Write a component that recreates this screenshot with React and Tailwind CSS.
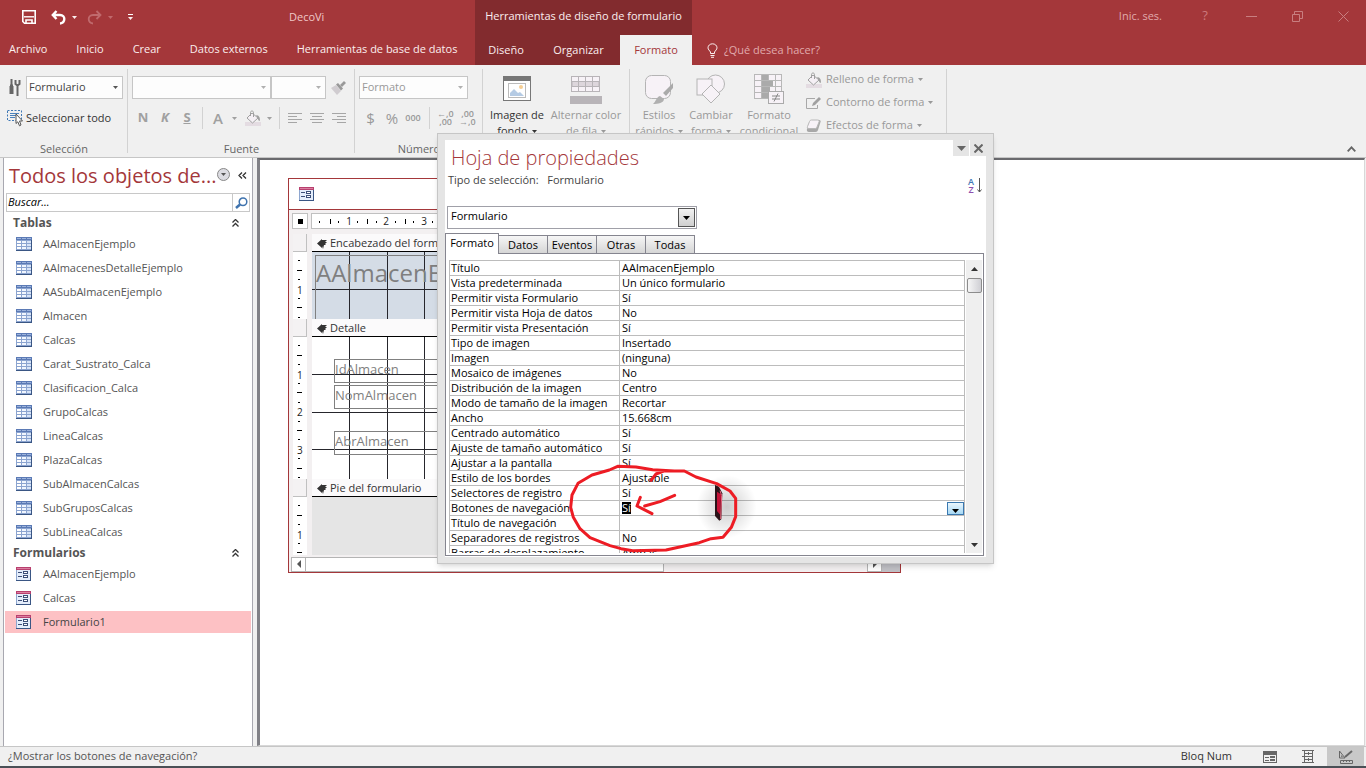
import { useState } from "react";

const tablas = [
  "AAlmacenEjemplo",
  "AAlmacenesDetalleEjemplo",
  "AASubAlmacenEjemplo",
  "Almacen",
  "Calcas",
  "Carat_Sustrato_Calca",
  "Clasificacion_Calca",
  "GrupoCalcas",
  "LineaCalcas",
  "PlazaCalcas",
  "SubAlmacenCalcas",
  "SubGruposCalcas",
  "SubLineaCalcas",
];

const formularios = ["AAlmacenEjemplo", "Calcas", "Formulario1"];

const propiedades = [
  ["Título", "AAlmacenEjemplo"],
  ["Vista predeterminada", "Un único formulario"],
  ["Permitir vista Formulario", "Sí"],
  ["Permitir vista Hoja de datos", "No"],
  ["Permitir vista Presentación", "Sí"],
  ["Tipo de imagen", "Insertado"],
  ["Imagen", "(ninguna)"],
  ["Mosaico de imágenes", "No"],
  ["Distribución de la imagen", "Centro"],
  ["Modo de tamaño de la imagen", "Recortar"],
  ["Ancho", "15.668cm"],
  ["Centrado automático", "Sí"],
  ["Ajuste de tamaño automático", "Sí"],
  ["Ajustar a la pantalla", "Sí"],
  ["Estilo de los bordes", "Ajustable"],
  ["Selectores de registro", "Sí"],
  ["Botones de navegación", "Sí"],
  ["Título de navegación", ""],
  ["Separadores de registros", "No"],
  ["Barras de desplazamiento", "Ambas"],
];

const Caret = ({ className = "" }) => (
  <svg width="5" height="3" viewBox="0 0 5 3" className={`shrink-0 ${className}`} fill="currentColor">
    <path d="M0 0h5L2.500 3z" />
  </svg>
);

const TableIcon = () => (
  <svg width="16" height="14" viewBox="0 0 16 14" className="shrink-0" shapeRendering="crispEdges">
    <rect width="16" height="14" fill="#8ba4d0" />
    <rect width="16" height="3" fill="#5b7ab5" />
    <path d="M1 1h4v1H1zM6 1h4v1H6zM11 1h4v1h-4z" fill="#9cb3dc" />
    <path d="M1 4h4v2H1zM1 7h4v2H1zM1 10h4v2H1z" fill="#fff" />
    <path d="M6 4h4v2H6zM6 7h4v2H6zM6 10h4v2H6z" fill="#f1f6fe" />
    <path d="M11 4h4v2h-4zM11 7h4v2h-4zM11 10h4v2h-4z" fill="#d6e3f7" />
    <path d="M15 3h1v11H0v-1h15z" fill="#3a5684" />
  </svg>
);

const FormIcon = () => (
  <svg width="15" height="14" viewBox="0 0 15 14" className="shrink-0" shapeRendering="crispEdges">
    <rect width="15" height="14" fill="#8ea6cf" />
    <rect width="15" height="3" fill="#b8406f" />
    <rect x="1" y="1" width="13" height="1" fill="#dc7ea0" />
    <rect x="1" y="3" width="13" height="10" fill="#e4edfb" />
    <path d="M2 5h4v1H2zM2 9h4v1H2z" fill="#3d4f78" />
    <path d="M7 4h5v3H7zM7 8h5v3H7z" fill="#3d4f78" />
    <path d="M8 5h3v1H8zM8 9h3v1H8z" fill="#fff" />
    <path d="M14 3h1v11H0v-1h14z" fill="#3a5684" />
  </svg>
);

const BucketIcon = () => (
  <svg width="16" height="16" viewBox="0 0 16 16" fill="none" className="shrink-0">
    <rect x="0" y="12" width="16" height="4" fill="#e4dce2" />
    <path d="M7 3L13 8 7.500 13 2 8z" fill="#f5f0f5" stroke="#a0a0a0" />
    <path d="M5.500 6V2.500c0-2 3-2 3 0V7" stroke="#a0a0a0" />
    <path d="M11 5c3 .5 4 2 4 5.500-1 .5-2 0-2-2z" fill="#a0a0a0" />
  </svg>
);

const Header = () => (
  <header className="flex h-[65px] shrink-0 bg-[#a4373a] text-[11px] text-[#fbeeee]">
    <div className="flex w-[475px] shrink-0 flex-col">
      <div className="flex h-[34px] items-center pl-[21px]">
        <button aria-label="Guardar">
          <svg width="16" height="16" viewBox="0 0 16 16" fill="none" stroke="#fff" strokeWidth="1.600">
            <path d="M1.800 1.800h12.400v12.400H3.500L1.800 12.500z" />
            <path d="M3 7.800h10" strokeWidth="1.400" />
            <path d="M5 14v-3h6v3" />
          </svg>
        </button>
        <button aria-label="Deshacer" className="ml-[14px] flex items-center gap-[6px]">
          <svg width="15" height="15" viewBox="0 0 15 15" fill="none" stroke="#fff" strokeWidth="2.400">
            <path d="M5.500 1L1.800 5l3.700 4M2 5h7c6 0 5.500 8 0 8.500" />
          </svg>
          <Caret />
        </button>
        <button aria-label="Rehacer" disabled className="ml-[10px] flex items-center gap-[6px] text-[#c06a6d]">
          <svg width="15" height="15" viewBox="0 0 15 15" fill="none" stroke="currentColor" strokeWidth="1.800">
            <path d="M9.500 1l4 4-4 4M13 5H6c-6 0-5.500 8 0 8.500" />
          </svg>
          <Caret />
        </button>
        <button aria-label="Personalizar" className="ml-[14px] flex w-[6px] flex-col items-center gap-[2px]">
          <span className="h-px w-[5px] bg-white" />
          <Caret />
        </button>
        <h1 className="ml-[156px] text-[#f0c8c8]">DecoVi</h1>
      </div>
      <nav className="flex h-[31px] items-center gap-[29px] pl-[9px] whitespace-nowrap">
        <button>Archivo</button>
        <button>Inicio</button>
        <button>Crear</button>
        <button>Datos externos</button>
        <button>Herramientas de base de datos</button>
      </nav>
    </div>
    <div className="flex w-[217px] shrink-0 flex-col bg-[#822b2e]">
      <p className="h-[35px] text-center leading-[32px] whitespace-nowrap">Herramientas de diseño de formulario</p>
      <div className="flex h-[30px]">
        <button className="w-[62px]">Diseño</button>
        <button className="w-[83px]">Organizar</button>
        <button className="w-[72px] bg-[#f0f0f0] text-[#a4373a]">Formato</button>
      </div>
    </div>
    <div className="flex flex-1 flex-col">
      <div className="flex h-[35px] items-center justify-end pr-[17px] pb-[3px] text-[#e0aaac]">
        <button>Inic. ses.</button>
        <button aria-label="Ayuda" className="ml-[38px] w-[10px] text-[13px] text-[#cc7a7d]">?</button>
        <button aria-label="Minimizar" className="ml-[36px]">
          <svg width="11" height="11" viewBox="0 0 11 11" stroke="#c87e80"><path d="M0 5.500h11" /></svg>
        </button>
        <button aria-label="Restaurar" className="ml-[35px]">
          <svg width="11" height="11" viewBox="0 0 11 11" fill="none" stroke="#c87e80">
            <path d="M.5 3.500h7v7h-7zM2.500 3V.5h8v7H8" />
          </svg>
        </button>
        <button aria-label="Cerrar" className="ml-[35px]">
          <svg width="11" height="11" viewBox="0 0 11 11" fill="none" stroke="#c87e80"><path d="M.5.5l10 10M10.500.5l-10 10" /></svg>
        </button>
      </div>
      <button className="flex h-[30px] items-center gap-[6px] pl-[15px] text-[#e0aaac]">
        <svg width="11" height="15" viewBox="0 0 11 15" fill="none" stroke="#fbeeee">
          <path d="M3.500 10.500V9C2.500 7.500 1 6.500 1 4.800 1 2.500 3 .8 5.500.8S10 2.500 10 4.800C10 6.500 8.500 7.500 7.500 9v1.500zM3.500 12.500h4M4 14.300h3" />
        </svg>
        ¿Qué desea hacer?
      </button>
    </div>
  </header>
);

const RibbonGroup = ({ label, className = "", children }) => (
  <section className={`relative flex shrink-0 flex-col pt-[11px] after:absolute after:top-1 after:right-0 after:h-[84px] after:w-px after:bg-[#d2d2d2] ${className}`}>
    {children}
    {label && <p className="mt-auto text-center leading-[16px] text-[#666]">{label}</p>}
  </section>
);

const Combo = ({ label, value, disabled, className = "" }) => (
  <div className={`relative h-[23px] ${className}`}>
    <select
      aria-label={label}
      disabled={disabled}
      defaultValue={value}
      className="h-full w-full appearance-none border border-[#c6c6c6] bg-[#fdfdfd] pl-[2px] text-[#444] disabled:text-[#999] disabled:opacity-100"
    >
      <option>{value}</option>
    </select>
    <Caret className={`pointer-events-none absolute top-[10px] right-[5px] ${disabled ? "text-[#b0b0b0]" : "text-[#555]"}`} />
  </div>
);

const BigButton = ({ icon, lines, disabled, caret, className = "" }) => (
  <button disabled={disabled} className={`flex flex-col items-center text-[#333] disabled:text-[#999] ${className}`}>
    <span className="flex h-[31px] items-center">{icon}</span>
    <span className="leading-4 whitespace-nowrap">{lines[0]}</span>
    <span className="flex items-center gap-1 leading-4 whitespace-nowrap">
      {lines[1]}
      {caret && <Caret />}
    </span>
  </button>
);

const AlignIcon = ({ d }) => (
  <svg width="14" height="12" viewBox="0 0 14 12" stroke="#a6a6a6" shapeRendering="crispEdges"><path d={d} /></svg>
);

const Ribbon = () => (
  <div className="flex h-[93px] shrink-0 border-b border-[#c6c6c6] bg-[#f0f0f0] text-[11px]">
    <RibbonGroup label="Selección" className="w-[128px]">
      <div className="flex items-center gap-[5px] pl-[9px]">
        <svg width="12" height="17" viewBox="0 0 12 17" fill="none" stroke="#666">
          <path d="M2.500 0v6" strokeWidth="2" />
          <path d="M2.500 7v8" strokeWidth="4" />
          <path d="M1 6.500h3" strokeWidth="2" />
          <path d="M6.500 1v4l2 1.500 2-1.500V1M8.500 6v11" strokeWidth="2" />
        </svg>
        <Combo label="Objeto seleccionado" value="Formulario" className="w-[97px]" />
      </div>
      <button className="mt-2 flex h-[23px] items-center gap-[3px] pl-[7px] whitespace-nowrap text-[#333]">
        <svg width="16" height="17" viewBox="0 0 16 17" fill="none">
          <path d="M.5.500h14v10H.5z" stroke="#3f78b5" strokeDasharray="2 1.500" />
          <path d="M3 3.500h9M3 5.500h6M3 7.500h5" stroke="#4b82bb" />
          <path d="M9 4l6.500 7h-3l1.500 4-1.500.8-1.700-4L9 13.500z" fill="#fff" stroke="#555" />
        </svg>
        Seleccionar todo
      </button>
    </RibbonGroup>

    <RibbonGroup label="Fuente" className="w-[227px]">
      <div className="flex items-center pl-[4px]">
        <Combo label="Fuente" value="" disabled className="w-[139px]" />
        <Combo label="Tamaño" value="" disabled className="w-[55px]" />
        <button aria-label="Copiar formato" disabled className="ml-[5px]">
          <svg width="15" height="14" viewBox="0 0 15 14">
            <path d="M0 7l5-3 5 6-4 4z" fill="#d0ccd0" />
            <path d="M5 3.500L7 2l5 5.500-2 2z" fill="#999" />
            <path d="M9 4l4-4 2 2-4 4z" fill="#999" />
          </svg>
        </button>
      </div>
      <div className="mt-2 flex h-[22px] items-center text-[13px] font-bold text-[#a0a0a0]">
        <button disabled className="ml-[8px] w-[14px]">N</button>
        <button disabled className="ml-[8px] w-[14px] italic">K</button>
        <button disabled className="ml-[8px] w-[14px] underline">S</button>
        <span className="ml-[8px] h-[22px] w-px bg-[#d2d2d2]" />
        <button disabled aria-label="Color de fuente" className="ml-[10px] flex items-center gap-[9px] text-[15px] font-semibold">A<Caret /></button>
        <button disabled aria-label="Color de fondo" className="ml-[8px] flex items-center gap-[6px]"><BucketIcon /><Caret /></button>
        <span className="ml-[7px] h-[22px] w-px bg-[#d2d2d2]" />
        <button disabled aria-label="Alinear a la izquierda" className="ml-[8px]"><AlignIcon d="M0 1.500h14M0 4.500h9M0 7.500h14M0 10.500h9" /></button>
        <button disabled aria-label="Centrar" className="ml-[8px]"><AlignIcon d="M0 1.500h14M2 4.500h10M0 7.500h14M2 10.500h10" /></button>
        <button disabled aria-label="Alinear a la derecha" className="ml-[8px]"><AlignIcon d="M0 1.500h14M5 4.500h9M0 7.500h14M5 10.500h9" /></button>
      </div>
    </RibbonGroup>

    <RibbonGroup label="Número" className="w-[128px]">
      <Combo label="Formato de número" value="Formato" disabled className="ml-[4px] w-[109px]" />
      <div className="mt-2 flex h-[22px] items-center text-[#999]">
        <button disabled className="ml-[10px] w-[11px] text-[15px]">$</button>
        <button disabled className="ml-[9px] w-[14px] text-[15px]">%</button>
        <button disabled className="ml-[6px] w-[16px] text-[9px] font-semibold">000</button>
        <span className="ml-[8px] h-[22px] w-px bg-[#d2d2d2]" />
        <button disabled className="ml-[7px] w-[15px] text-right text-[9px] leading-[8px] font-semibold whitespace-nowrap">←,0<br />,00</button>
        <button disabled className="ml-[7px] w-[15px] text-right text-[9px] leading-[8px] font-semibold whitespace-nowrap">,00<br />→,0</button>
      </div>
    </RibbonGroup>

    <RibbonGroup className="w-[147px]">
      <div className="flex h-[64px] pl-[1px]">
        <BigButton
          className="w-[66px]"
          lines={["Imagen de", "fondo"]}
          caret
          icon={
            <svg width="28" height="25" viewBox="0 0 28 25" className="-mt-[7px]">
              <rect x=".5" y=".5" width="27" height="24" fill="#fff" stroke="#777" />
              <rect width="28" height="5" fill="#777" />
              <rect x="5.500" y="7.500" width="17" height="14" fill="#fff" stroke="#bbb" />
              <circle cx="18" cy="11" r="2" fill="#f6cf94" />
              <path d="M7 20v-3l4-4 4 4 2-1 4 4z" fill="#b5cbe4" />
            </svg>
          }
        />
        <BigButton
          className="w-[72px]"
          disabled
          caret
          lines={["Alternar color", "de fila"]}
          icon={
            <svg width="32" height="28" viewBox="0 0 32 28" fill="none" stroke="#b8b4b8" className="-mt-[4px]">
              <rect x="1.500" y=".5" width="28" height="15" fill="#f7f2f7" />
              <rect x="2" y="5.500" width="27" height="5" fill="#ddd6dc" />
              <path d="M8.500 0v16M15.500 0v16M22.500 0v16" />
              <rect x="0" y="20" width="32" height="8" fill="#b8b4b8" stroke="none" />
            </svg>
          }
        />
      </div>
    </RibbonGroup>

    <RibbonGroup className="w-[317px]">
      <div className="flex h-[64px]">
        <BigButton
          className="w-[58px]"
          disabled
          caret
          lines={["Estilos", "rápidos"]}
          icon={
            <svg width="30" height="30" viewBox="0 0 30 30" fill="none" className="-mt-[6px]">
              <rect x="1.500" y="1.500" width="25" height="23" rx="6" fill="#f7f2f7" stroke="#b4b4b4" />
              <path d="M29 9v5l-7 8-3-3z" fill="#aaa" />
              <path d="M18 20l3 3" stroke="#f7f2f7" strokeWidth="2" />
              <path d="M9 30c3-2 3-7 7-8l4 3c0 4-6 5-11 5z" fill="#b0b0b0" />
            </svg>
          }
        />
        <BigButton
          className="w-[46px]"
          disabled
          caret
          lines={["Cambiar", "forma"]}
          icon={
            <svg width="30" height="30" viewBox="0 0 30 30" fill="#f7f2f7" stroke="#b4b4b4" className="-mt-[6px]">
              <circle cx="19.500" cy="10" r="9" />
              <rect x="1" y="5" width="15" height="16" />
              <path d="M15 11l9 9-9 9-9-9z" />
            </svg>
          }
        />
        <BigButton
          className="w-[70px]"
          disabled
          lines={["Formato", "condicional"]}
          icon={
            <svg width="30" height="30" viewBox="0 0 30 30" fill="none" stroke="#b8b8b8" className="-mt-[6px]">
              <rect x=".5" y=".5" width="27" height="24" fill="#f7f2f7" />
              <path d="M7.500 0v25M14.500 0v25M21.500 0v25M0 6.500h28M0 12.500h28M0 18.500h28" />
              <path d="M8 1h6v5H8zM8 7h11v5H8zM8 13h8v5H8zM8 19h6v5H8z" fill="#aaa" stroke="none" />
              <rect x="14.500" y="17.500" width="15" height="12" fill="#f7f2f7" stroke="#aaa" />
              <path d="M18 22h8M18 25h8M24 19.500l-4 8" stroke="#888" />
            </svg>
          }
        />
        <div className="flex flex-col pl-[2px] text-[#999]">
          <button disabled className="-mt-[8px] flex h-[23px] items-center gap-1 whitespace-nowrap"><BucketIcon />Relleno de forma<Caret /></button>
          <button disabled className="flex h-[23px] items-center gap-1 whitespace-nowrap">
            <svg width="16" height="14" viewBox="0 0 16 14" fill="none" stroke="#a8a8a8">
              <path d="M9 2.500H.5v10h11V9" />
              <path d="M6 10l1-3 6-6 2 2-6 6z" fill="#a0a0a0" stroke="none" />
            </svg>
            Contorno de forma<Caret />
          </button>
          <button disabled className="flex h-[23px] items-center gap-1 whitespace-nowrap">
            <svg width="16" height="14" viewBox="0 0 16 14" fill="none">
              <path d="M5 1h8c1.500 0 2 1 1.500 2L12 11c-.5 1-1 2-2.500 2H3c-2 0-2.500-1.500-2-3z" fill="#a8a8a8" />
              <path d="M5.500 1h6c1.500 0 2 1 1.500 2l-2 5c-.5 1-1 1.500-2 1.500H3c-1.500 0-2-1-1.500-2l2-5C4 1.500 4.500 1 5.500 1z" fill="#f7f2f7" stroke="#b8b8b8" />
            </svg>
            Efectos de forma<Caret />
          </button>
        </div>
      </div>
    </RibbonGroup>

    <div className="flex flex-1 items-end justify-end pr-[10px] pb-[5px]">
      <button aria-label="Contraer la cinta de opciones">
        <svg width="9" height="6" viewBox="0 0 9 6" fill="none" stroke="#666" strokeWidth="1.800"><path d="M.7 5.300l3.800-4 3.800 4" /></svg>
      </button>
    </div>
  </div>
);

const GroupHeader = ({ title }) => (
  <button className="flex h-[18px] w-full items-center justify-between pr-[13px] pl-[9px] text-[12px] font-bold text-[#555]">
    {title}
    <svg width="7" height="8" viewBox="0 0 7 8" fill="none" stroke="#333" strokeWidth="1.300"><path d="M.5 3.500l3-3 3 3M.5 7.500l3-3 3 3" /></svg>
  </button>
);

const NavPane = () => {
  const [activo, setActivo] = useState("Formulario1");

  return (
    <aside className="ml-[3px] w-[250px] shrink-0 border-x border-[#a8a8b0] bg-white text-[11px] text-[#555]">
      <div className="flex h-[35px] items-center pl-[5px]">
        <h2 className="w-[208px] text-[20px] whitespace-nowrap text-[#a4373a]">Todos los objetos de...</h2>
        <button aria-label="Filtro" className="mb-[3px] flex size-[13px] shrink-0 items-center justify-center rounded-full border border-[#888] bg-[#dcdce2]">
          <Caret />
        </button>
        <button aria-label="Contraer panel" className="ml-[8px]">
          <svg width="9" height="7" viewBox="0 0 9 7" fill="none" stroke="#333" strokeWidth="1.300"><path d="M4 .5l-3 3 3 3M8 .5l-3 3 3 3" /></svg>
        </button>
      </div>
      <div className="mr-[2px] ml-[2px] flex h-[19px] border border-[#c8c8c8]">
        <input aria-label="Buscar" placeholder="Buscar..." className="min-w-0 flex-1 pl-px italic outline-none placeholder:text-black" />
        <button aria-label="Buscar objetos" className="flex w-[17px] items-center justify-center border-l border-[#c8c8c8]">
          <svg width="13" height="12" viewBox="0 0 13 12" fill="none" stroke="#3f73ae">
            <circle cx="8" cy="4.800" r="3.800" strokeWidth="1.500" />
            <path d="M5 7.500L1 11" strokeWidth="2.500" />
          </svg>
        </button>
      </div>
      <div className="pt-[2px]">
        <GroupHeader title="Tablas" />
        <ul>
          {tablas.map((nombre) => (
            <li key={nombre} className="flex h-6 items-center gap-[11px] pl-[12px]">
              <TableIcon />
              {nombre}
            </li>
          ))}
        </ul>
        <GroupHeader title="Formularios" />
        <ul>
          {formularios.map((nombre) => (
            <li
              key={nombre}
              onClick={() => setActivo(nombre)}
              className={`mx-px my-[2px] flex h-[22px] items-center gap-[12px] pl-[11px] first:mt-px ${activo === nombre ? "bg-[#fdc1c4] text-[#444]" : ""}`}
            >
              <FormIcon />
              {nombre}
            </li>
          ))}
        </ul>
      </div>
    </aside>
  );
};

// one centimetre is 37.5px on the rulers
const VRuler = ({ height, size }) => {
  const marks = [];
  for (let q = 1; q * 9.4 < size; q++) {
    const y = Math.round(q * 9.4);
    if (q % 4 === 0) {
      marks.push(<text key={q} x="4" y={y + 4} fontSize="10" stroke="none" fill="#222">{q / 4}</text>);
    } else if (q % 2 === 0) {
      marks.push(<path key={q} d={`M4 ${y - 0.5}h5`} />);
    } else {
      marks.push(<path key={q} d={`M5 ${y - 0.5}h2`} />);
    }
  }
  return (
    <svg width="14" height={height} stroke="#000" shapeRendering="crispEdges" className="block bg-white">{marks}</svg>
  );
};

const HRuler = () => {
  const marks = [];
  for (let q = 1; q < 62; q++) {
    const x = Math.round(q * 9.4) - 1;
    if (q % 4 === 0) {
      marks.push(<text key={q} x={x} y="11" fontSize="10" textAnchor="middle" stroke="none" fill="#222">{q / 4}</text>);
    } else if (q % 2 === 0) {
      marks.push(<path key={q} d={`M${x + 0.5} 5v5`} />);
    } else {
      marks.push(<path key={q} d={`M${x - 0.5} 7v2`} />);
    }
  }
  return (
    <svg width="100%" height="14" stroke="#000" shapeRendering="crispEdges" className="block bg-white">{marks}</svg>
  );
};

const Grid = ({ height }) => {
  const lines = [];
  for (let i = 1; i < 16; i++) {
    const p = Math.floor(i * 37.5);
    lines.push(<path key={`v${i}`} d={`M${p + 0.5} 0v${height}`} />);
    if (p < height) lines.push(<path key={`h${i}`} d={`M0 ${p + 0.5}h600`} />);
  }
  return <svg width="100%" height={height} stroke="#26262c" shapeRendering="crispEdges" className="block">{lines}</svg>;
};

const SectionBar = ({ title }) => (
  <div className="flex">
    <div className="mr-[5px] ml-[4px] h-[18px] w-[14px] shrink-0 border-r border-b border-[#c0c0c0] bg-[#f4f2f3]" />
    <div className="flex h-[18px] flex-1 items-center gap-[3px] border-b border-black bg-[#fbfafb] pt-[2px] pl-[5px] whitespace-nowrap text-[#333]">
      <svg width="10" height="10" viewBox="0 0 10 10" fill="#333"><path d="M5 0L0 4.500 5 9V7l1 3 1-4h2l-1-1 2-2H8l2-2H5z" /></svg>
      {title}
    </div>
  </div>
);

const Section = ({ height, rulerSize, className = "", children }) => (
  <div className="flex">
    <div className="mr-[5px] ml-[4px] w-[14px] shrink-0"><VRuler height={height} size={rulerSize} /></div>
    <div className={`relative flex-1 overflow-hidden ${className}`}>{children}</div>
  </div>
);

const FormDesign = () => (
  <section className="w-[613px] border border-[#a4373a] bg-[#f3f0f1] text-[11px]">
    <div className="flex h-[31px] items-center border-b border-[#a4373a] bg-white pl-[10px]">
      <FormIcon />
    </div>
    <div className="flex gap-[3px] pt-[3px] pl-[3px]">
      <div className="flex size-[16px] shrink-0 items-center justify-center border border-[#c0c0c0] bg-white">
        <span className="size-[5px] bg-black" />
      </div>
      <div className="min-w-0 flex-1 overflow-hidden border border-r-0 border-[#c0c0c0]"><HRuler /></div>
    </div>
    <div className="mt-[5px]">
      <SectionBar title="Encabezado del formulario" />
      <Section height={67} rulerSize={67} className="bg-[#d4dce6]">
        <Grid height={67} />
        <p className="absolute top-[3px] left-[3px] h-[80px] w-[400px] border border-[#808080] text-[24px] leading-[34px] text-[#7f7f7f]">AAlmacenEjemplo</p>
      </Section>
      <SectionBar title="Detalle" />
      <Section height={142} rulerSize={142} className="bg-white">
        <Grid height={142} />
        <p className="absolute top-[22px] left-[22px] h-[24px] w-[200px] border border-[#808080] text-[13px] leading-[18px] text-[#7f7f7f]">IdAlmacen</p>
        <p className="absolute top-[48px] left-[22px] h-[24px] w-[200px] border border-[#808080] text-[13px] leading-[18px] text-[#7f7f7f]">NomAlmacen</p>
        <p className="absolute top-[94px] left-[22px] h-[24px] w-[200px] border border-[#808080] text-[13px] leading-[18px] text-[#7f7f7f]">AbrAlmacen</p>
      </Section>
      <SectionBar title="Pie del formulario" />
      <Section height={58} rulerSize={58} className="bg-[#e5e5e5]" />
    </div>
    <div className="flex h-[17px] items-center pt-px pl-[2px]">
      <button aria-label="Desplazar a la izquierda" className="flex h-[15px] w-[15px] items-center justify-center border border-[#b4b4b4] bg-white">
        <svg width="4" height="8" viewBox="0 0 4 8" fill="#555"><path d="M4 0v8L0 4z" /></svg>
      </button>
      <span className="h-[15px] w-[358px] border border-l-0 border-[#b4b4b4] bg-white" />
      <span className="flex-1" />
      <button aria-label="Desplazar a la derecha" className="flex h-[15px] w-[15px] items-center justify-center border border-[#b4b4b4] bg-white">
        <svg width="4" height="8" viewBox="0 0 4 8" fill="#555"><path d="M0 0v8l4-4z" /></svg>
      </button>
      <span className="h-[16px] w-[18px] bg-[#c0c0c5]" />
    </div>
  </section>
);

const SheetTab = ({ children, active, onClick }) => (
  <button
    role="tab"
    aria-selected={active}
    onClick={onClick}
    className={
      active
        ? "-mb-px h-[21px] w-[54px] border border-b-0 border-[#85858f] bg-white pb-[2px]"
        : "h-[18px] w-[49px] border border-b-0 border-l-0 border-[#85858f] bg-linear-to-b from-[#f6f6f6] to-[#d6d6d6] pt-px whitespace-nowrap"
    }
  >
    {children}
  </button>
);

const PropertySheet = () => {
  const [tab, setTab] = useState("Formato");

  return (
    <section className="absolute top-[133px] left-[437px] w-[557px] border border-[#c6c6c6] bg-[#e5e5e5] px-[7px] py-[6px] text-[11px] text-black shadow-md">
      <div className="bg-white">
        <div className="flex h-[33px] items-start">
          <h2 className="flex-1 pl-[6px] text-[20px] leading-[35px] font-light text-[#a4373a]">Hoja de propiedades</h2>
          <button aria-label="Opciones" className="flex size-[16px] items-center justify-center bg-[#e5e5e5]">
            <svg width="9" height="5" viewBox="0 0 9 5" fill="#666"><path d="M0 0h9L4.500 5z" /></svg>
          </button>
          <button aria-label="Cerrar" className="ml-px flex size-[16px] items-center justify-center bg-[#e5e5e5]">
            <svg width="9" height="9" viewBox="0 0 9 9" fill="none" stroke="#666" strokeWidth="2"><path d="M.5.5l8 8M8.500.5l-8 8" /></svg>
          </button>
        </div>
        <div className="flex h-[33px] justify-between pr-[4px] pl-[3px] text-[#444]">
          <p className="leading-[13px]">Tipo de selección:&nbsp;&nbsp; Formulario</p>
          <button aria-label="Ordenar" className="mt-[4px] flex h-[17px] items-center gap-[3px]">
            <span className="flex flex-col text-[9px] leading-[8px] font-semibold">
              <span className="text-[#3f78b5]">A</span>
              <span className="text-[#8e4fae]">Z</span>
            </span>
            <svg width="5" height="15" viewBox="0 0 5 15" fill="none" stroke="#555"><path d="M2.500 0v14M.5 11.500l2 2.500 2-2.500" /></svg>
          </button>
        </div>
        <div className="relative ml-[2px] h-[23px] w-[250px]">
          <select aria-label="Objeto" className="h-full w-full appearance-none border border-[#a0a0a8] pb-[2px] pl-[3px]">
            <option>Formulario</option>
          </select>
          <span className="pointer-events-none absolute top-[2px] right-[2px] flex h-[19px] w-[17px] items-center justify-center border border-[#555] bg-linear-to-b from-[#f2f2f2] to-[#cfcfcf]">
            <svg width="7" height="4" viewBox="0 0 7 4"><path d="M0 0h7L3.500 4z" /></svg>
          </span>
        </div>
        <div role="tablist" className="mt-[4px] flex h-[20px] items-end">
          {["Formato", "Datos", "Eventos", "Otras", "Todas"].map((t) => (
            <SheetTab key={t} active={t === tab} onClick={() => setTab(t)}>{t}</SheetTab>
          ))}
        </div>
        <div className="mr-[2px] flex h-[303px] gap-px border border-[#85858f] pt-[6px] pr-px pb-[2px] pl-[3px]">
          <div className="flex-1 overflow-hidden border-x border-t border-[#bcbcbc]">
            <table className="w-full table-fixed border-separate border-spacing-0">
              <tbody>
                {propiedades.map(([nombre, valor]) => (
                  <tr key={nombre} className="h-[15px]">
                    <th className="h-[15px] w-[170px] border-r border-b border-[#bcbcbc] p-0 pl-px text-left leading-[14px] font-normal whitespace-nowrap">{nombre}</th>
                    <td className="h-[15px] border-b border-[#bcbcbc] p-0 pl-[2px] leading-[14px]">
                      {nombre === "Botones de navegación" ? (
                        <div className="flex h-[14px] items-center justify-between">
                          <span className="h-[12px] bg-black leading-[12px] text-white">{valor}</span>
                          <button aria-label="Abrir lista" className="flex h-[13px] w-[17px] items-end justify-center border border-[#3a78b0] bg-linear-to-b from-[#eaf6fd] to-[#a7d9f5] pb-px">
                            <svg width="7" height="4" viewBox="0 0 7 4"><path d="M0 0h7L3.500 4z" /></svg>
                          </button>
                        </div>
                      ) : (
                        valor
                      )}
                    </td>
                  </tr>
                ))}
              </tbody>
            </table>
          </div>
          <div className="flex w-[16px] flex-col items-center bg-[#efefef] pt-[7px] pb-[6px]">
            <svg width="7" height="4" viewBox="0 0 7 4" fill="#333"><path d="M0 4h7L3.500 0z" /></svg>
            <span className="mt-[7px] h-[15px] w-[15px] rounded-[2px] border border-[#8c8c8c] bg-linear-to-r from-[#f6f6f6] to-[#cfcfd4]" />
            <svg width="7" height="4" viewBox="0 0 7 4" fill="#333" className="mt-auto"><path d="M0 0h7L3.500 4z" /></svg>
          </div>
        </div>
        <div className="h-px" />
      </div>
    </section>
  );
};

// hand drawn marker around "Botones de navegación"
const Marker = () => (
  <svg className="pointer-events-none absolute top-[460px] left-[560px]" width="210" height="100" viewBox="372 180 630 300" fill="none">
    <defs>
      <radialGradient id="sombra">
        <stop offset="0" stopColor="#000" stopOpacity=".2" />
        <stop offset="1" stopColor="#000" stopOpacity="0" />
      </radialGradient>
    </defs>
    <ellipse cx="872" cy="320" rx="90" ry="95" fill="url(#sombra)" />
    <path d="M837 255l12 5 10 20-3 78-6 4-13-14z" fill="#2a1218" />
    <path d="M843 275l12 8-2 62-10-12z" fill="#c41238" />
    <path d="M852 272l5 15-3 70" stroke="#ef6a80" strokeWidth="3" />
    <g stroke="#ed1c24" strokeWidth="9" strokeLinecap="round" strokeLinejoin="round">
      <path d="M645 241L660 222 683 213 745 213 780 231 842 251 882 273 899 295 899 350 886 382 861 412 825 416 790 428 745 438 690 450 590 452 555 446 522 437 462 413 432 386 412 352 404 322 408 285 426 250 468 225 520 210 545 199 600 201 650 209 715 213" />
      <path d="M716 286L672 305 626 318M613 292L603 318 623 328 648 341" />
    </g>
  </svg>
);

const StatusBar = () => (
  <footer className="flex h-[22px] shrink-0 items-center border-t border-b-2 border-t-[#c6c6c6] border-b-[#4a5056] bg-[#f0f0f0] text-[11px] text-[#555]">
    <p className="flex-1 pl-[8px]">¿Mostrar los botones de navegación?</p>
    <p className="text-[#333]">Bloq Num</p>
    <button aria-label="Vista Formulario" className="ml-[31px]">
      <svg width="14" height="12" viewBox="0 0 14 12" fill="#666" shapeRendering="crispEdges">
        <path d="M0 0h14v12H0zM1 4v7h12V4z" fillRule="evenodd" />
        <path d="M2 6h4v1H2zM2 9h4v1H2zM7 5h5v2H7zM7 8h5v2H7z" />
      </svg>
    </button>
    <button aria-label="Vista Presentación" className="ml-[25px]">
      <svg width="13" height="13" viewBox="0 0 13 13" fill="none" stroke="#666" shapeRendering="crispEdges">
        <path d="M0 .5h12M0 12.500h12M2.500 1v11M10.500 1v11M3 3.500h7M0 6.500h10M3 9.500h7M6.500 2v3M6.500 8v3" />
      </svg>
    </button>
    <button aria-label="Vista Diseño" className="mr-[2px] ml-[12px] flex h-full w-[37px] items-center justify-center bg-[#c8c8c8]">
      <svg width="14" height="14" viewBox="0 0 14 14" fill="none" stroke="#666">
        <path d="M.5 1v7H6zM2.500 5.500v1h1" /><path d="M6 7l7-6" strokeWidth="2" />
        <path d="M1.500 10.500h12v3h-12zM4.500 10v2M7.500 10v2M10.500 10v2" />
      </svg>
    </button>
  </footer>
);

const App = () => {
  return (
    <div className="relative flex h-screen flex-col overflow-hidden bg-[#f0f0f0] font-['Open_Sans','Noto_Sans',sans-serif]">
      <Header />
      <Ribbon />
      <main className="flex min-h-0 flex-1">
        <NavPane />
        <div className="mr-px ml-[4px] flex-1 overflow-hidden border-t-2 border-r border-b border-l-3 border-t-[#6a6a6e] border-r-[#d8d8d8] border-b-[#d8d8d8] border-l-[#808086] bg-white pt-[18px] pl-[28px]">
          <FormDesign />
        </div>
      </main>
      <StatusBar />
      <PropertySheet />
      <Marker />
    </div>
  );
};

export default App;
